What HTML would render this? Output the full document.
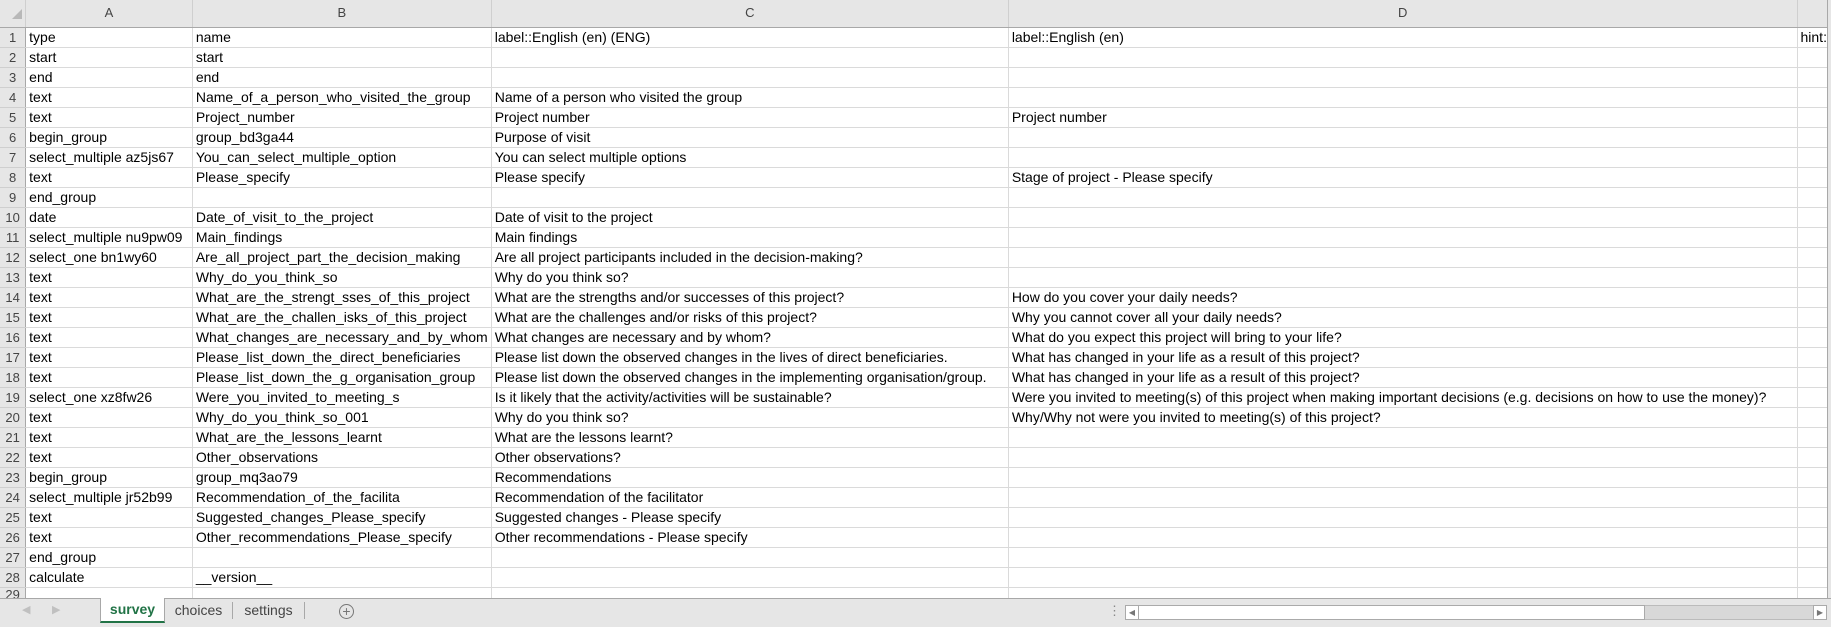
<!DOCTYPE html>
<html><head><meta charset="utf-8"><style>
*{margin:0;padding:0;box-sizing:border-box}
body{width:1831px;height:627px;overflow:hidden;background:#e6e6e6;font-family:"Liberation Sans",Arial,sans-serif;position:relative}
table{position:absolute;left:0;top:0;border-collapse:collapse;table-layout:fixed;background:#fff}
td{height:20px;border-right:1px solid #dadada;border-bottom:1px solid #dadada;font-size:14px;color:#000;padding:0 3px;white-space:nowrap;overflow:hidden;line-height:19px}
tr.h td{height:27px;background:#e6e6e6;color:#444;text-align:center;border-right:1px solid #cfcfcf;border-bottom:1px solid #a8a8a8;line-height:26px;font-size:13px}
td.r{background:#e6e6e6;color:#444;text-align:center;border-right:1px solid #a8a8a8;border-bottom:1px solid #cfcfcf;padding:0;font-size:13px}
#tabs{position:absolute;left:0;top:598px;width:1831px;height:29px;background:#e6e6e6;border-top:1px solid #a8a8a8;font-size:14px;color:#444}
.t{position:absolute;top:0;height:24px;line-height:22px;text-align:center}
</style></head><body>
<table>
<colgroup><col style="width:26px"><col style="width:167px"><col style="width:296px"><col style="width:518px"><col style="width:790px"><col style="width:30px"></colgroup>
<tr class="h"><td style="background:#e6e6e6"><svg width="12" height="12" style="position:relative;top:3px;left:4px"><path d="M11 1L11 11L1 11Z" fill="#b8b8b8"/></svg></td><td>A</td><td>B</td><td>C</td><td>D</td><td></td></tr>
<tr><td class="r">1</td><td>type</td><td>name</td><td>label::English (en) (ENG)</td><td>label::English (en)</td><td>hint:</td></tr>
<tr><td class="r">2</td><td>start</td><td>start</td><td></td><td></td><td></td></tr>
<tr><td class="r">3</td><td>end</td><td>end</td><td></td><td></td><td></td></tr>
<tr><td class="r">4</td><td>text</td><td>Name_of_a_person_who_visited_the_group</td><td>Name of a person who visited the group</td><td></td><td></td></tr>
<tr><td class="r">5</td><td>text</td><td>Project_number</td><td>Project number</td><td>Project number</td><td></td></tr>
<tr><td class="r">6</td><td>begin_group</td><td>group_bd3ga44</td><td>Purpose of visit</td><td></td><td></td></tr>
<tr><td class="r">7</td><td>select_multiple az5js67</td><td>You_can_select_multiple_option</td><td>You can select multiple options</td><td></td><td></td></tr>
<tr><td class="r">8</td><td>text</td><td>Please_specify</td><td>Please specify</td><td>Stage of project - Please specify</td><td></td></tr>
<tr><td class="r">9</td><td>end_group</td><td></td><td></td><td></td><td></td></tr>
<tr><td class="r">10</td><td>date</td><td>Date_of_visit_to_the_project</td><td>Date of visit to the project</td><td></td><td></td></tr>
<tr><td class="r">11</td><td>select_multiple nu9pw09</td><td>Main_findings</td><td>Main findings</td><td></td><td></td></tr>
<tr><td class="r">12</td><td>select_one bn1wy60</td><td>Are_all_project_part_the_decision_making</td><td>Are all project participants included in the decision-making?</td><td></td><td></td></tr>
<tr><td class="r">13</td><td>text</td><td>Why_do_you_think_so</td><td>Why do you think so?</td><td></td><td></td></tr>
<tr><td class="r">14</td><td>text</td><td>What_are_the_strengt_sses_of_this_project</td><td>What are the strengths and/or successes of this project?</td><td>How do you cover your daily needs?</td><td></td></tr>
<tr><td class="r">15</td><td>text</td><td>What_are_the_challen_isks_of_this_project</td><td>What are the challenges and/or risks of this project?</td><td>Why you cannot cover all your daily needs?</td><td></td></tr>
<tr><td class="r">16</td><td>text</td><td>What_changes_are_necessary_and_by_whom</td><td>What changes are necessary and by whom?</td><td>What do you expect this project will bring to your life?</td><td></td></tr>
<tr><td class="r">17</td><td>text</td><td>Please_list_down_the_direct_beneficiaries</td><td>Please list down the observed changes in the lives of direct beneficiaries.</td><td>What has changed in your life as a result of this project?</td><td></td></tr>
<tr><td class="r">18</td><td>text</td><td>Please_list_down_the_g_organisation_group</td><td>Please list down the observed changes in the implementing organisation/group.</td><td>What has changed in your life as a result of this project?</td><td></td></tr>
<tr><td class="r">19</td><td>select_one xz8fw26</td><td>Were_you_invited_to_meeting_s</td><td>Is it likely that the activity/activities will be sustainable?</td><td>Were you invited to meeting(s) of this project when making important decisions (e.g. decisions on how to use the money)?</td><td></td></tr>
<tr><td class="r">20</td><td>text</td><td>Why_do_you_think_so_001</td><td>Why do you think so?</td><td>Why/Why not were you invited to meeting(s) of this project?</td><td></td></tr>
<tr><td class="r">21</td><td>text</td><td>What_are_the_lessons_learnt</td><td>What are the lessons learnt?</td><td></td><td></td></tr>
<tr><td class="r">22</td><td>text</td><td>Other_observations</td><td>Other observations?</td><td></td><td></td></tr>
<tr><td class="r">23</td><td>begin_group</td><td>group_mq3ao79</td><td>Recommendations</td><td></td><td></td></tr>
<tr><td class="r">24</td><td>select_multiple jr52b99</td><td>Recommendation_of_the_facilita</td><td>Recommendation of the facilitator</td><td></td><td></td></tr>
<tr><td class="r">25</td><td>text</td><td>Suggested_changes_Please_specify</td><td>Suggested changes - Please specify</td><td></td><td></td></tr>
<tr><td class="r">26</td><td>text</td><td>Other_recommendations_Please_specify</td><td>Other recommendations - Please specify</td><td></td><td></td></tr>
<tr><td class="r">27</td><td>end_group</td><td></td><td></td><td></td><td></td></tr>
<tr><td class="r">28</td><td>calculate</td><td>__version__</td><td></td><td></td><td></td></tr>
<tr><td class="r" style="vertical-align:top;line-height:14px">29</td><td></td><td></td><td></td><td></td><td></td></tr>
</table>
<div style="position:absolute;left:1827px;top:0;width:4px;height:598px;background:#e6e6e6;border-left:1px solid #a8a8a8"></div>
<div id="tabs">
<div class="t" style="left:22px;color:#c0c0c0;font-size:11px">&#9664;</div>
<div class="t" style="left:52px;color:#c0c0c0;font-size:11px">&#9654;</div>
<div class="t" style="left:100px;width:65px;background:#fff;color:#217346;font-weight:bold;border-bottom:2px solid #217346;border-left:1px solid #a8a8a8;border-right:1px solid #a8a8a8;top:-1px;height:25px">survey</div>
<div class="t" style="left:165px;width:68px;border-right:1px solid #a8a8a8;top:3px;height:17px;line-height:17px">choices</div>
<div class="t" style="left:233px;width:72px;border-right:1px solid #a8a8a8;top:3px;height:17px;line-height:17px">settings</div>
<div style="position:absolute;left:339px;top:5px;width:15px;height:15px;border:1px solid #777;border-radius:50%;text-align:center;line-height:12px;font-size:14px;color:#777">+</div>
<div style="position:absolute;left:1108px;top:4px;color:#888;font-size:13px">&#8942;</div>
<div style="position:absolute;left:1125px;top:6px;width:701px;height:15px;background:#d8d8d8;border:1px solid #bbb"></div>
<div style="position:absolute;left:1125px;top:6px;width:520px;height:15px;background:#fff;border:1px solid #aaa"></div>
<div style="position:absolute;left:1125px;top:6px;width:14px;height:15px;background:#fff;border:1px solid #aaa;font-size:8px;color:#777;text-align:center;line-height:13px">&#9664;</div>
<div style="position:absolute;left:1813px;top:6px;width:14px;height:15px;background:#fff;border:1px solid #aaa;font-size:8px;color:#777;text-align:center;line-height:13px">&#9654;</div>
</div>
</body></html>
